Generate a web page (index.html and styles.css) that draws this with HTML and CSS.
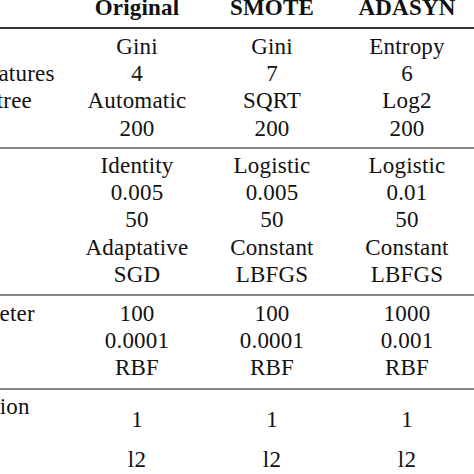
FILE: index.html
```html
<!DOCTYPE html>
<html>
<head>
<meta charset="utf-8">
<link rel="stylesheet" href="styles.css">
</head>
<body>
<div class="page">
<table class="params">
  <colgroup>
    <col class="c-label">
    <col class="c-val">
    <col class="c-val">
    <col class="c-val">
  </colgroup>
  <thead>
    <tr class="head">
      <th class="label"></th>
      <th>Original</th>
      <th>SMOTE</th>
      <th>ADASYN</th>
    </tr>
  </thead>
  <tbody>
    <tr class="g g1">
      <td class="label">
        <div class="line">&nbsp;</div>
        <div class="line">Max. features</div>
        <div class="line">Levels/&#8202;tree</div>
        <div class="line">&nbsp;</div>
      </td>
      <td><div class="line">Gini</div><div class="line">4</div><div class="line">Automatic</div><div class="line">200</div></td>
      <td><div class="line">Gini</div><div class="line">7</div><div class="line">SQRT</div><div class="line">200</div></td>
      <td><div class="line">Entropy</div><div class="line">6</div><div class="line">Log2</div><div class="line">200</div></td>
    </tr>
    <tr class="g g2">
      <td class="label">
        <div class="line">&nbsp;</div>
        <div class="line">&nbsp;</div>
        <div class="line">&nbsp;</div>
        <div class="line">&nbsp;</div>
        <div class="line">&nbsp;</div>
      </td>
      <td><div class="line">Identity</div><div class="line">0.005</div><div class="line">50</div><div class="line">Adaptative</div><div class="line">SGD</div></td>
      <td><div class="line">Logistic</div><div class="line">0.005</div><div class="line">50</div><div class="line">Constant</div><div class="line">LBFGS</div></td>
      <td><div class="line">Logistic</div><div class="line">0.01</div><div class="line">50</div><div class="line">Constant</div><div class="line">LBFGS</div></td>
    </tr>
    <tr class="g g3">
      <td class="label">
        <div class="line">Cparameter</div>
        <div class="line">&nbsp;</div>
        <div class="line">&nbsp;</div>
      </td>
      <td><div class="line">100</div><div class="line">0.0001</div><div class="line">RBF</div></td>
      <td><div class="line">100</div><div class="line">0.0001</div><div class="line">RBF</div></td>
      <td><div class="line">1000</div><div class="line">0.001</div><div class="line">RBF</div></td>
    </tr>
    <tr class="g g4">
      <td class="label">
        <div class="line">Regression</div>
        <div class="line">&nbsp;</div>
        <div class="line">&nbsp;</div>
      </td>
      <td class="wide"><div class="line">1</div><div class="line">l2</div></td>
      <td class="wide"><div class="line">1</div><div class="line">l2</div></td>
      <td class="wide"><div class="line">1</div><div class="line">l2</div></td>
    </tr>
  </tbody>
</table>
</div>
</body>
</html>
```

FILE: styles.css
```css
html, body {
  margin: 0;
  padding: 0;
  background: #ffffff;
  overflow: hidden;
}
body {
  width: 474px;
  height: 474px;
}
.page {
  margin-top: -5.7px;
  margin-left: -74.5px;
}
.params {
  border-collapse: separate;
  border-spacing: 0;
  table-layout: fixed;
  width: 549px;
  font-family: "Liberation Serif", "Times New Roman", serif;
  font-size: 23px;
  letter-spacing: 0.2px;
  color: #111111;
}
.c-label { width: 144px; }
.c-val { width: 135px; }
.params th,
.params td {
  padding: 0;
  text-align: center;
  vertical-align: top;
  white-space: nowrap;
  line-height: 27.2px;
}
.params .label {
  text-align: left;
}
.head th {
  font-weight: bold;
  padding-bottom: 5.7px;
  border-bottom: 2px solid #333333;
}
.line {
  height: 27.2px;
}
.g td { border-bottom: 2px solid #858585; }
.g4 td { border-bottom: none; }
.g1 td { padding-top: 3.8px; padding-bottom: 5.4px; }
.g2 td { padding-top: 2.8px; padding-bottom: 6px; }
.g3 td { padding-top: 3.7px; padding-bottom: 6.4px; }
.g4 td { padding-top: 3.9px; }
.g4 td.wide { padding-top: 10.8px; }
.wide .line {
  height: 40px;
  line-height: 40px;
}
```
